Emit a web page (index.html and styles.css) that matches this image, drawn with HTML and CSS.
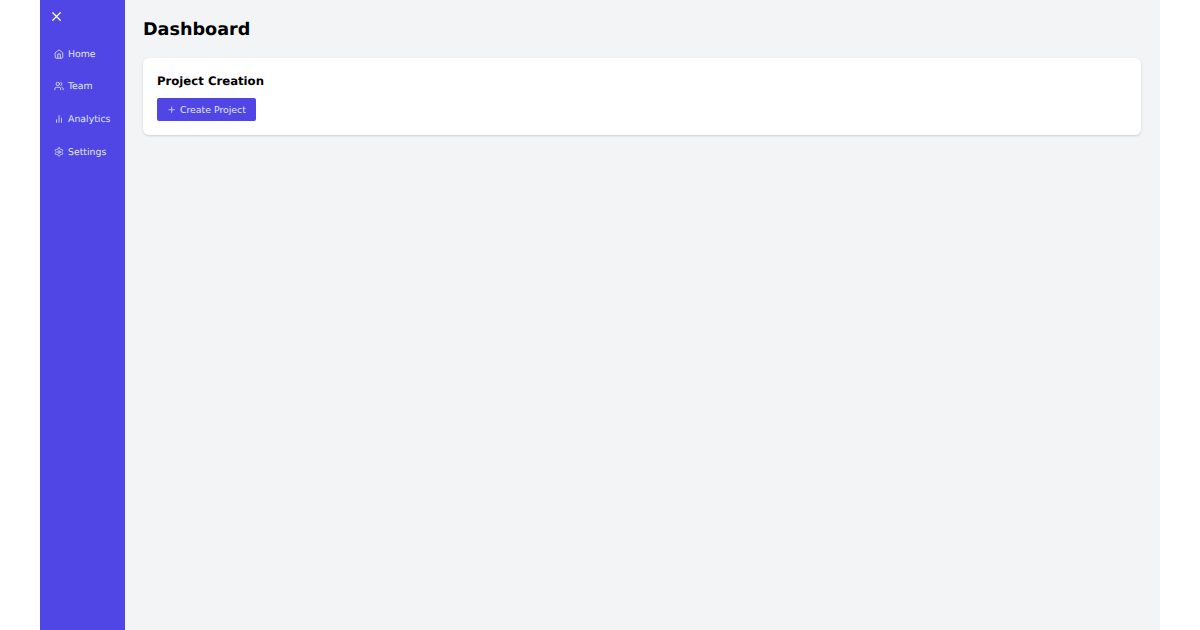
FILE: index.html
```html
<!DOCTYPE html>
<html lang="en">

<head>
  <meta charset="UTF-8" />
  <title>Dashboard</title>
  <link rel="stylesheet" href="styles.css">
</head>

<body>
  <div class="app">
    <aside class="sidebar">
      <button class="close-btn" aria-label="Close">
        <svg class="close-icon" viewBox="0 0 24 24"><path d="M18 6 6 18M6 6l12 12" /></svg>
      </button>
      <nav class="nav">
        <a class="nav-item" href="#">
          <svg class="nav-icon" viewBox="0 0 24 24"><path d="m3 9 9-7 9 7v11a2 2 0 0 1-2 2H5a2 2 0 0 1-2-2z" /><path d="M9 22V12h6v10" /></svg>
          Home
        </a>
        <a class="nav-item" href="#">
          <svg class="nav-icon" viewBox="0 0 24 24"><path d="M16 21v-2a4 4 0 0 0-4-4H6a4 4 0 0 0-4 4v2" /><circle cx="9" cy="7" r="4" /><path d="M22 21v-2a4 4 0 0 0-3-3.87" /><path d="M16 3.13a4 4 0 0 1 0 7.75" /></svg>
          Team
        </a>
        <a class="nav-item" href="#">
          <svg class="nav-icon" viewBox="0 0 24 24"><path d="M18 20V10M12 20V4M6 20v-6" /></svg>
          Analytics
        </a>
        <a class="nav-item" href="#">
          <svg class="nav-icon" viewBox="0 0 24 24"><path d="M12.22 2h-.44a2 2 0 0 0-2 2v.18a2 2 0 0 1-1 1.73l-.43.25a2 2 0 0 1-2 0l-.15-.08a2 2 0 0 0-2.73.73l-.22.38a2 2 0 0 0 .73 2.73l.15.1a2 2 0 0 1 1 1.72v.51a2 2 0 0 1-1 1.74l-.15.09a2 2 0 0 0-.73 2.73l.22.38a2 2 0 0 0 2.73.73l.15-.08a2 2 0 0 1 2 0l.43.25a2 2 0 0 1 1 1.73V20a2 2 0 0 0 2 2h.44a2 2 0 0 0 2-2v-.18a2 2 0 0 1 1-1.73l.43-.25a2 2 0 0 1 2 0l.15.08a2 2 0 0 0 2.73-.73l.22-.39a2 2 0 0 0-.73-2.73l-.15-.08a2 2 0 0 1-1-1.74v-.5a2 2 0 0 1 1-1.74l.15-.09a2 2 0 0 0 .73-2.73l-.22-.38a2 2 0 0 0-2.73-.73l-.15.08a2 2 0 0 1-2 0l-.43-.25a2 2 0 0 1-1-1.73V4a2 2 0 0 0-2-2z" /><circle cx="12" cy="12" r="3" /></svg>
          Settings
        </a>
      </nav>
    </aside>

    <main class="main">
      <h1>Dashboard</h1>
      <section class="card">
        <h2>Project Creation</h2>
        <button class="create-btn">
          <svg class="plus-icon" viewBox="0 0 24 24"><path d="M12 5v14M5 12h14" /></svg>
          Create Project
        </button>
      </section>
    </main>
  </div>
</body>

</html>
```

FILE: styles.css
```css
* {
  box-sizing: border-box;
}

body {
  margin: 0;
  background: #ffffff;
  font-family: "DejaVu Sans", sans-serif;
  text-rendering: geometricPrecision;
}

.app {
  display: flex;
  width: 1120px;
  height: 630px;
  margin: 0 auto;
  overflow: hidden;
  background: #f3f4f6;
}

svg {
  fill: none;
  stroke: currentColor;
  stroke-linecap: round;
  stroke-linejoin: round;
  stroke-width: 2;
}

.sidebar {
  flex: 0 0 85px;
  background: #4f46e5;
  color: #ffffff;
}

.close-btn {
  display: block;
  width: 33px;
  height: 32px;
  padding: 8.5px 9px;
  background: none;
  border: none;
  color: #ffffff;
}

.close-icon {
  display: block;
  width: 15px;
  height: 15px;
}

.nav {
  display: flex;
  flex-direction: column;
  gap: 8px;
  padding: 10px 8px 0;
}

.nav-item {
  display: flex;
  align-items: center;
  gap: 4px;
  height: 24.6px;
  padding: 0 6px;
  color: #e0e7ff;
  font-size: 9.36px;
  text-decoration: none;
  white-space: nowrap;
}

.nav-icon {
  flex: none;
  width: 10px;
  height: 10px;
  margin-top: -1px;
}

.main {
  flex: 1;
  padding: 17px 19px 16px 18px;
}

h1 {
  margin: 0 0 15px;
  color: #000000;
  font-size: 17.6px;
  line-height: 26px;
  font-weight: 700;
}

.card {
  padding: 14px;
  background: #ffffff;
  border-radius: 6px;
  box-shadow: 0 1px 3px rgba(0, 0, 0, 0.1), 0 1px 2px rgba(0, 0, 0, 0.06);
}

h2 {
  margin: 0 0 8px;
  color: #000000;
  font-size: 11.7px;
  line-height: 18px;
  font-weight: 700;
}

.create-btn {
  display: flex;
  align-items: center;
  gap: 3.5px;
  height: 23px;
  padding: 0 10.5px 0 10px;
  background: #4f46e5;
  border: none;
  border-radius: 2px;
  color: #e0e7ff;
  font-family: "DejaVu Sans", sans-serif;
  font-size: 9.36px;
}

.plus-icon {
  width: 9.4px;
  height: 9.4px;
}
```
